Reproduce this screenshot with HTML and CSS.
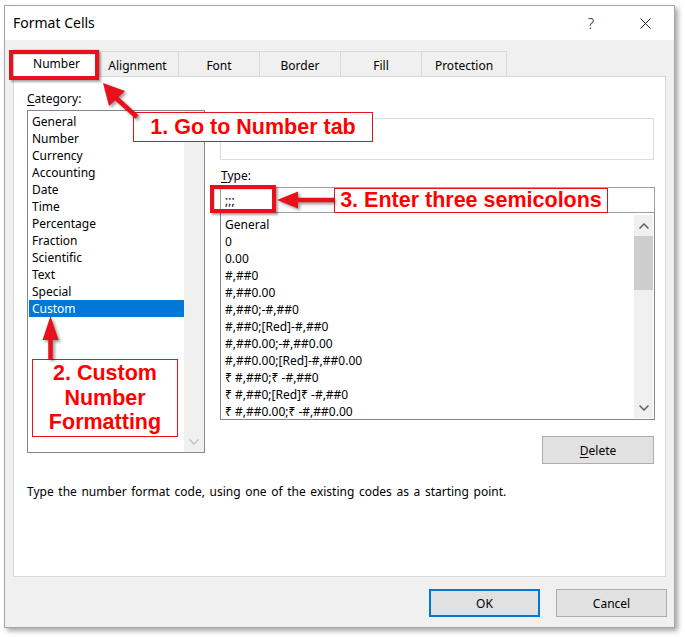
FILE: index.html
```html
<!DOCTYPE html>
<html>
<head>
<meta charset="utf-8">
<title>Format Cells</title>
<link rel="stylesheet" href="styles.css">
</head>
<body>
<div class="page">
  <div class="dialog">
    <div class="titlebar">
      <span class="title">Format Cells</span>
      <span class="spacer"></span>
      <span class="tbtn help">?</span>
      <span class="tbtn close">
        <svg width="11" height="11" viewBox="0 0 11 11"><path d="M0.5 0.5 L10.5 10.5 M10.5 0.5 L0.5 10.5" stroke="#1a1a1a" stroke-width="1" fill="none"/></svg>
      </span>
    </div>
    <div class="tabs">
      <div class="tab selected w-number">Number</div>
      <div class="tab w-align">Alignment</div>
      <div class="tab w-font">Font</div>
      <div class="tab w-border">Border</div>
      <div class="tab w-fill">Fill</div>
      <div class="tab w-prot">Protection</div>
    </div>
    <div class="panel">
      <div class="columns">
        <div class="leftcol">
          <div class="label"><u>C</u>ategory:</div>
          <div class="catlist">
            <div class="items">
              <div class="item">General</div>
              <div class="item">Number</div>
              <div class="item">Currency</div>
              <div class="item">Accounting</div>
              <div class="item">Date</div>
              <div class="item">Time</div>
              <div class="item">Percentage</div>
              <div class="item">Fraction</div>
              <div class="item">Scientific</div>
              <div class="item">Text</div>
              <div class="item">Special</div>
              <div class="item active">Custom</div>
            </div>
            <div class="vscroll cat-scroll">
              <div class="arrow">
                <svg width="10" height="6" viewBox="0 0 10 6"><path d="M0.5 5.5 L5 1 L9.5 5.5" stroke="#c2c2c2" stroke-width="1.4" fill="none"/></svg>
              </div>
              <div class="track"></div>
              <div class="arrow">
                <svg width="10" height="6" viewBox="0 0 10 6"><path d="M0.5 0.5 L5 5 L9.5 0.5" stroke="#c2c2c2" stroke-width="1.4" fill="none"/></svg>
              </div>
            </div>
          </div>
        </div>
        <div class="rightcol">
          <fieldset class="sample">
            <legend>Sample</legend>
          </fieldset>
          <div class="label type-label"><u>T</u>ype:</div>
          <div class="typeinput">;;;</div>
          <div class="typelist">
            <div class="items">
              <div class="item">General</div>
              <div class="item">0</div>
              <div class="item">0.00</div>
              <div class="item">#,##0</div>
              <div class="item">#,##0.00</div>
              <div class="item">#,##0;-#,##0</div>
              <div class="item">#,##0;[Red]-#,##0</div>
              <div class="item">#,##0.00;-#,##0.00</div>
              <div class="item">#,##0.00;[Red]-#,##0.00</div>
              <div class="item">₹ #,##0;₹ -#,##0</div>
              <div class="item">₹ #,##0;[Red]₹ -#,##0</div>
              <div class="item">₹ #,##0.00;₹ -#,##0.00</div>
            </div>
            <div class="vscroll type-scroll">
              <div class="arrow">
                <svg width="10" height="6" viewBox="0 0 10 6"><path d="M0.5 5.5 L5 1 L9.5 5.5" stroke="#606060" stroke-width="1.5" fill="none"/></svg>
              </div>
              <div class="thumb"></div>
              <div class="track"></div>
              <div class="arrow">
                <svg width="10" height="6" viewBox="0 0 10 6"><path d="M0.5 0.5 L5 5 L9.5 0.5" stroke="#606060" stroke-width="1.5" fill="none"/></svg>
              </div>
            </div>
          </div>
          <div class="btn delete"><u>D</u>elete</div>
        </div>
      </div>
      <div class="desc">Type the number format code, using one of the existing codes as a starting point.</div>
    </div>
    <div class="buttons">
      <div class="btn ok">OK</div>
      <div class="btn cancel">Cancel</div>
    </div>
  </div>

  <div class="hl hl-tab"></div>
  <div class="hl hl-type"></div>
  <div class="callout callout-1">1. Go to Number tab</div>
  <div class="callout callout-2">2. Custom<br>Number<br>Formatting</div>
  <div class="callout callout-3">3. Enter three semicolons</div>
  <svg class="arrows" width="685" height="637" viewBox="0 0 685 637">
    <g fill="#e8101a" stroke="#e8101a">
      <line x1="116" y1="98" x2="137" y2="117" stroke-width="4.5"/>
      <polygon points="103,83 109,106 125,91" stroke="none"/>
      <line x1="295" y1="200" x2="334" y2="200" stroke-width="4.5"/>
      <polygon points="277,200 298,191.5 298,208.5" stroke="none"/>
      <line x1="50.5" y1="338" x2="50.5" y2="359" stroke-width="4.5"/>
      <polygon points="50.5,316 42.5,340 58.5,340" stroke="none"/>
    </g>
  </svg>
</div>
</body>
</html>
```

FILE: styles.css
```css
* { box-sizing: border-box; }

html, body {
  margin: 0;
  padding: 0;
  background: #ffffff;
}

body {
  font-family: "Noto Sans", "Open Sans", sans-serif;
  font-size: 12px;
  color: #000;
}

.page {
  position: relative;
  width: 685px;
  height: 637px;
  overflow: hidden;
}

.dialog {
  margin: 5px 0 0 4px;
  width: 671px;
  height: 623px;
  border: 1px solid #a6a6a6;
  background: #f0f0f0;
  box-shadow: 3px 3px 5px rgba(0, 0, 0, 0.35);
  display: flex;
  flex-direction: column;
}

/* Title bar */
.titlebar {
  height: 34px;
  background: #ffffff;
  display: flex;
  align-items: center;
  padding: 0 6px 0 8px;
}
.title {
  font-size: 14px;
  line-height: 20px;
}
.spacer { flex: 1; }
.tbtn {
  width: 46px;
  display: flex;
  justify-content: center;
  align-items: center;
  height: 20px;
}
.help {
  font-size: 15px;
  font-weight: 300;
  margin-right: 8px;
  color: #1a1a1a;
}

/* Tabs */
.tabs {
  margin: 9px 0 0 8px;
  height: 27px;
  display: flex;
  align-items: flex-end;
  position: relative;
  z-index: 2;
}
.tab {
  height: 25px;
  line-height: 26px;
  padding-top: 1px;
  text-align: center;
  border: 1px solid #d9d9d9;
  border-bottom: none;
  background: #f0f0f0;
  margin-left: -1px;
}
.tab.selected {
  height: 28px;
  margin-bottom: -1px;
  margin-left: 0;
  padding-top: 0;
  background: #ffffff;
  line-height: 28px;
  position: relative;
  z-index: 3;
}
.w-number { width: 87px; }
.w-align { width: 83px; margin-left: -4px; }
.w-font { width: 82px; }
.w-border { width: 82px; }
.w-fill { width: 82px; }
.w-prot { width: 86px; }

/* Panel */
.panel {
  margin-left: 8px;
  width: 653px;
  height: 501px;
  background: #ffffff;
  border: 1px solid #d9d9d9;
  padding: 0 0 0 13px;
}
.columns {
  display: flex;
  gap: 15px;
}
.leftcol {
  width: 178px;
  padding-top: 13px;
}
.label {
  line-height: 18px;
  height: 16px;
}
.label u { text-decoration-thickness: 1px; text-underline-offset: 2px; }

.catlist {
  margin-top: 4px;
  height: 343px;
  border: 1px solid #828790;
  display: flex;
  background: #fff;
}
.items {
  flex: 1;
  overflow: hidden;
}
.catlist .items { padding: 2px 0 0 1px; }
.item {
  height: 17px;
  line-height: 17px;
  padding-left: 3px;
  white-space: nowrap;
}
.item.active {
  background: #0078d7;
  color: #ffffff;
}

.vscroll {
  display: flex;
  flex-direction: column;
  background: #f0f0f0;
}
.cat-scroll { width: 20px; }
.vscroll .arrow {
  height: 20px;
  display: flex;
  align-items: center;
  justify-content: center;
}
.vscroll .track { flex: 1; }

.rightcol {
  width: 435px;
  display: flex;
  flex-direction: column;
}
.sample {
  margin: 33px 1px 0 0;
  padding: 0 8px;
  height: 50px;
  border: 1px solid #dcdcdc;
  min-width: 0;
}
.sample legend {
  padding: 0 2px;
  line-height: 16px;
}
.type-label { margin-top: 7px; padding-left: 1px; }
.typeinput {
  margin-top: 4px;
  height: 26px;
  width: 435px;
  border: 1px solid #a0a0a0;
  padding-left: 4px;
  line-height: 26px;
  background: #fff;
  position: relative;
  z-index: 1;
}
.typelist {
  margin-top: -1px;
  height: 208px;
  border: 1px solid #828790;
  display: flex;
  background: #fff;
}
.typelist .items { padding: 3px 0 0 1px; }
.type-scroll {
  width: 19px;
  margin: 2px 1px 1px 0;
}
.type-scroll .arrow { height: 21px; }
.type-scroll .thumb {
  height: 54px;
  background: #cdcdcd;
}

.btn {
  height: 28px;
  width: 111px;
  border: 1px solid #adadad;
  background: #e1e1e1;
  text-align: center;
  line-height: 27px;
}
.btn u { text-underline-offset: 2px; }
.delete {
  margin-top: 16px;
  align-self: flex-end;
  width: 112px;
  margin-right: 1px;
}

.desc {
  margin-top: 19px;
  line-height: 18px;
  word-spacing: 1.5px;
}

/* Buttons row */
.buttons {
  display: flex;
  justify-content: flex-end;
  gap: 16px;
  margin-top: 12px;
  padding-right: 7px;
}
.ok {
  border: 2px solid #0078d7;
  line-height: 25px;
}

/* Annotations */
.hl, .callout, .arrows { z-index: 10; }
.hl {
  position: absolute;
  border: 4px solid #e8101a;
  box-shadow: 2px 2px 2px rgba(0, 0, 0, 0.35), inset 1px 1px 1px rgba(0, 0, 0, 0.15);
}
.hl-tab { left: 9px; top: 50px; width: 90px; height: 30px; }
.hl-type { left: 210px; top: 185px; width: 66px; height: 28px; }

.callout {
  position: absolute;
  background: #ffffff;
  border: 1px solid #e8101a;
  color: #ff0000;
  font-family: "Liberation Sans", Arial, sans-serif;
  font-weight: bold;
  font-size: 21.5px;
  text-align: center;
  white-space: nowrap;
}
.callout-1 { left: 133px; top: 112px; width: 240px; height: 30px; line-height: 28px; }
.callout-3 { left: 334px; top: 188px; width: 274px; height: 25px; line-height: 23px; }
.callout-2 { left: 32px; top: 359px; width: 146px; height: 78px; line-height: 24.5px; padding-top: 1px; }

.arrows {
  position: absolute;
  left: 0;
  top: 0;
  pointer-events: none;
  filter: drop-shadow(2px 2px 1.5px rgba(0, 0, 0, 0.4));
}
```
